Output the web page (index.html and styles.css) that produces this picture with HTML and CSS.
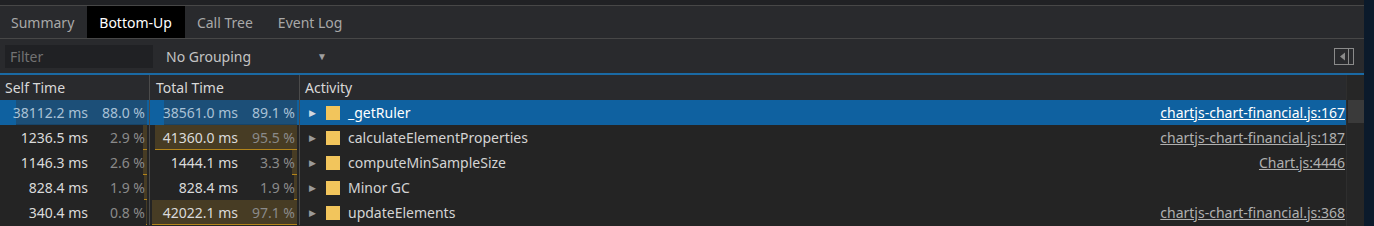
FILE: index.html
```html
<!DOCTYPE html>
<html lang="en">
<head>
  <meta charset="UTF-8" />
  <title>Bottom-Up</title>
  <link rel="stylesheet" href="styles.css">
</head>
<body>
  <div class="frame">
    <div class="panel">
      <div class="top-strip"></div>

      <div class="tabs">
        <span class="tab">Summary</span>
        <span class="tab active">Bottom-Up</span>
        <span class="tab">Call Tree</span>
        <span class="tab">Event Log</span>
      </div>

      <div class="toolbar">
        <div class="filter">Filter</div>
        <div class="grouping">
          <span>No Grouping</span>
          <span class="arrow">&#9660;</span>
        </div>
        <div class="spacer"></div>
        <svg class="sidebar-toggle" width="20" height="17" viewBox="0 0 20 17">
          <rect x="0.5" y="0.5" width="19" height="16" fill="none" stroke="#8a8a8a"/>
          <line x1="14.5" y1="1" x2="14.5" y2="16" stroke="#8a8a8a"/>
          <polygon points="11,4.5 11,12.5 6,8.5" fill="#8a8a8a"/>
        </svg>
      </div>

      <div class="grid">
        <div class="table">
          <div class="row head">
            <div class="cell self">Self Time</div>
            <div class="cell total">Total Time</div>
            <div class="cell activity">Activity</div>
          </div>

          <div class="row selected">
            <div class="cell self num">
              <div class="bar" style="width: 88.0%"></div>
              <span class="ms">38112.2 ms</span><span class="pct">88.0 %</span>
            </div>
            <div class="cell total num">
              <div class="bar" style="width: 89.1%"></div>
              <span class="ms">38561.0 ms</span><span class="pct">89.1 %</span>
            </div>
            <div class="cell activity">
              <span class="tri">&#9654;</span><span class="swatch"></span>
              <span class="name">_getRuler</span>
              <a class="link">chartjs-chart-financial.js:167</a>
            </div>
          </div>

          <div class="row">
            <div class="cell self num">
              <div class="bar" style="width: 2.9%"></div>
              <span class="ms">1236.5 ms</span><span class="pct">2.9 %</span>
            </div>
            <div class="cell total num">
              <div class="bar" style="width: 95.5%"></div>
              <span class="ms">41360.0 ms</span><span class="pct">95.5 %</span>
            </div>
            <div class="cell activity">
              <span class="tri">&#9654;</span><span class="swatch"></span>
              <span class="name">calculateElementProperties</span>
              <a class="link">chartjs-chart-financial.js:187</a>
            </div>
          </div>

          <div class="row">
            <div class="cell self num">
              <div class="bar" style="width: 2.6%"></div>
              <span class="ms">1146.3 ms</span><span class="pct">2.6 %</span>
            </div>
            <div class="cell total num">
              <div class="bar" style="width: 3.3%"></div>
              <span class="ms">1444.1 ms</span><span class="pct">3.3 %</span>
            </div>
            <div class="cell activity">
              <span class="tri">&#9654;</span><span class="swatch"></span>
              <span class="name">computeMinSampleSize</span>
              <a class="link">Chart.js:4446</a>
            </div>
          </div>

          <div class="row">
            <div class="cell self num">
              <div class="bar" style="width: 1.9%"></div>
              <span class="ms">828.4 ms</span><span class="pct">1.9 %</span>
            </div>
            <div class="cell total num">
              <div class="bar" style="width: 1.9%"></div>
              <span class="ms">828.4 ms</span><span class="pct">1.9 %</span>
            </div>
            <div class="cell activity">
              <span class="tri">&#9654;</span><span class="swatch"></span>
              <span class="name">Minor GC</span>
            </div>
          </div>

          <div class="row">
            <div class="cell self num">
              <div class="bar" style="width: 0.8%"></div>
              <span class="ms">340.4 ms</span><span class="pct">0.8 %</span>
            </div>
            <div class="cell total num">
              <div class="bar" style="width: 97.1%"></div>
              <span class="ms">42022.1 ms</span><span class="pct">97.1 %</span>
            </div>
            <div class="cell activity">
              <span class="tri">&#9654;</span><span class="swatch"></span>
              <span class="name">updateElements</span>
              <a class="link">chartjs-chart-financial.js:368</a>
            </div>
          </div>
        </div>

        <div class="scrollbar">
          <div class="thumb"></div>
        </div>
      </div>
    </div>
    <div class="edge"></div>
  </div>
</body>
</html>
```

FILE: styles.css
```css
body {
  margin: 0;
  font-family: "Noto Sans", "Open Sans", Arial, sans-serif;
  font-size: 14px;
  background-color: #242424;
  color: #d4d4d4;
  overflow: hidden;
}

.frame {
  display: flex;
  width: 1374px;
  height: 226px;
}

.panel {
  flex: 1;
  display: flex;
  flex-direction: column;
  min-width: 0;
}

.edge {
  width: 10px;
  background-color: #0b1a2b;
}

.top-strip {
  height: 5px;
  background-color: #202124;
  border-bottom: 1px solid #474747;
}

.tabs {
  display: flex;
  height: 32px;
  background-color: #292a2d;
  border-bottom: 1px solid #474747;
}

.tab {
  display: flex;
  align-items: center;
  padding: 0 13px 0 12px;
  color: #a8a8a8;
}

.tab:first-child {
  padding-left: 11px;
}

.tab.active {
  background-color: #000000;
  color: #ffffff;
}

.toolbar {
  display: flex;
  align-items: center;
  height: 34px;
  background-color: #292a2d;
  border-bottom: 2px solid #1a6aa5;
}

.filter {
  width: 143px;
  height: 23px;
  margin-left: 5px;
  padding-left: 5px;
  background-color: #202124;
  color: #727272;
  line-height: 23px;
}

.grouping {
  display: flex;
  align-items: center;
  margin-left: 13px;
  color: #c4c4c4;
}

.grouping .arrow {
  margin-left: 66px;
  font-size: 10px;
  color: #a0a0a0;
}

.spacer {
  flex: 1;
}

.sidebar-toggle {
  margin-right: 10px;
}

.grid {
  display: flex;
  flex: 1;
}

.table {
  flex: 1;
}

.row {
  display: flex;
  height: 25px;
}

.row.head {
  background-color: #292a2d;
  color: #d8d8d8;
}

.cell {
  position: relative;
  display: flex;
  align-items: center;
  box-sizing: border-box;
  border-right: 1px solid #4b4b4b;
}

.cell.self,
.cell.total {
  width: 150px;
}

.row.head .cell {
  padding-left: 5px;
}

.row.head .cell.total {
  padding-left: 6px;
}

.cell.activity {
  flex: 1;
  border-right: none;
  padding-left: 9px;
  padding-right: 1px;
}

.row.head .cell.activity {
  padding-left: 5px;
}

.num {
  justify-content: flex-end;
  padding-right: 4px;
}

.num .ms,
.num .pct {
  position: relative;
}

.num .ms {
  color: #dadada;
}

.num .pct {
  width: 57px;
  text-align: right;
  color: #8a8a8a;
}

.bar {
  position: absolute;
  top: 0;
  bottom: 0;
  right: 2px;
  box-sizing: border-box;
  background-color: #473c24;
  border-bottom: 1px solid #b2841a;
}

.row.selected {
  background-color: #0f61a0;
  color: #ffffff;
}

.row.selected .bar {
  background-color: #1c4f78;
  border-bottom: 1px solid #174468;
}

.row.selected .ms,
.row.selected .pct {
  color: #a9c1d6;
}

.tri {
  font-size: 9px;
  color: #9a9a9a;
  width: 17px;
}

.row.selected .tri {
  color: #d0d8e0;
}

.swatch {
  width: 14px;
  height: 14px;
  background-color: #f2c55c;
  margin-right: 8px;
}

.name {
  flex: 1;
  color: #d4d4d4;
}

.row.selected .name {
  color: #ffffff;
}

.link {
  color: #b0b0b0;
  text-decoration: underline;
}

.row.selected .link {
  color: #ffffff;
}

.scrollbar {
  width: 17px;
  background-color: #262626;
  border-left: 1px solid #2e2e2e;
  padding-top: 25px;
}

.thumb {
  height: 23px;
  background-color: #3a3a3a;
  margin: 0 0 0 1px;
}
```
